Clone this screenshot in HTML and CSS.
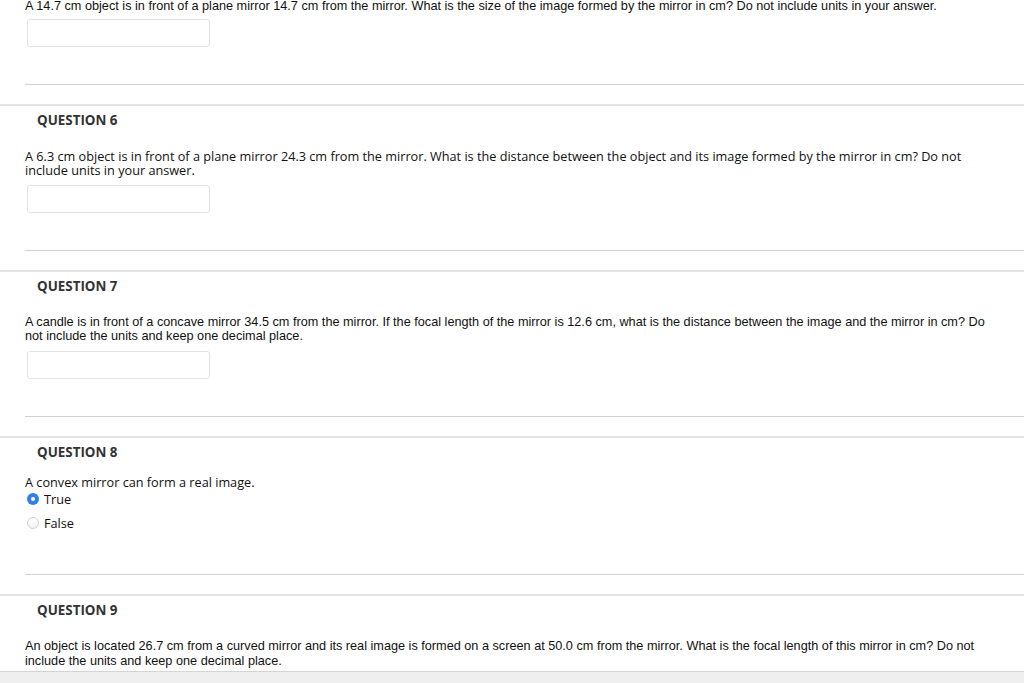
FILE: index.html
```html
<!DOCTYPE html>
<html lang="en">
<head>
<meta charset="utf-8">
<title>Quiz</title>
<link rel="stylesheet" href="styles.css">
</head>
<body>
<div class="page">
  <section class="question question-first">
    <div class="q-body">
      <p class="q-text arial">A 14.7 cm object is in front of a plane mirror 14.7 cm from the mirror. What is the size of the image formed by the mirror in cm? Do not include units in your answer.</p>
      <div class="answer-box"></div>
      <div class="separator"></div>
    </div>
  </section>

  <section class="question">
    <div class="divider"></div>
    <h2 class="q-title">QUESTION 6</h2>
    <div class="q-body">
      <p class="q-text sans">A 6.3 cm object is in front of a plane mirror 24.3 cm from the mirror. What is the distance between the object and its image formed by the mirror in cm? Do not<br>include units in your answer.</p>
      <div class="answer-box"></div>
      <div class="separator"></div>
    </div>
  </section>

  <section class="question">
    <div class="divider"></div>
    <h2 class="q-title">QUESTION 7</h2>
    <div class="q-body">
      <p class="q-text arial">A candle is in front of a concave mirror 34.5 cm from the mirror. If the focal length of the mirror is 12.6 cm, what is the distance between the image and the mirror in cm? Do<br>not include the units and keep one decimal place.</p>
      <div class="answer-box"></div>
      <div class="separator"></div>
    </div>
  </section>

  <section class="question">
    <div class="divider"></div>
    <h2 class="q-title">QUESTION 8</h2>
    <div class="q-body">
      <p class="q-text sans q-text-tight">A convex mirror can form a real image.</p>
      <div class="options">
        <label class="option"><span class="radio radio-on"></span><span class="option-label">True</span></label>
        <label class="option"><span class="radio"></span><span class="option-label">False</span></label>
      </div>
      <div class="separator separator-options"></div>
    </div>
  </section>

  <section class="question">
    <div class="divider"></div>
    <h2 class="q-title">QUESTION 9</h2>
    <div class="q-body">
      <p class="q-text arial q-text-loose">An object is located 26.7 cm from a curved mirror and its real image is formed on a screen at 50.0 cm from the mirror. What is the focal length of this mirror in cm? Do not<br>include the units and keep one decimal place.</p>
    </div>
  </section>
</div>
<div class="footer-band"></div>
</body>
</html>
```

FILE: styles.css
```css
html, body {
  margin: 0;
  padding: 0;
  background: #ffffff;
  height: 683px;
  overflow: hidden;
}

body {
  font-family: "Open Sans", "Liberation Sans", Arial, sans-serif;
  color: #111111;
  display: flex;
  flex-direction: column;
}

.page {
  display: flex;
  flex-direction: column;
}

.question {
  display: flex;
  flex-direction: column;
}

.divider {
  height: 2px;
  background: #e4e4e4;
}

.q-title {
  margin: 5px 0 0 37px;
  font-family: "Open Sans", sans-serif;
  font-weight: 700;
  font-size: 13.4px;
  line-height: 18px;
  color: #333333;
  letter-spacing: 0;
}

.q-body {
  display: flex;
  flex-direction: column;
  padding-left: 25px;
}

.q-text {
  margin: 20px 0 0 0;
  font-size: 13px;
  line-height: 14px;
  color: #111111;
}

.question-first .q-text {
  margin-top: -1px;
}

.question-first .answer-box {
  margin-top: 6px;
}

.q-text-tight {
  margin-top: 14px;
}

.q-text-loose {
  line-height: 15px;
}

.arial {
  font-family: "Liberation Sans", Arial, sans-serif;
  font-size: 12.7px;
}

.sans {
  font-family: "Open Sans", sans-serif;
  font-size: 12.7px;
}

.answer-box {
  margin: 8px 0 0 2px;
  width: 183px;
  height: 28px;
  box-sizing: border-box;
  border: 1px solid #e2e2e2;
  border-radius: 3px;
  background: #ffffff;
}

.separator {
  margin-top: 37px;
  margin-bottom: 19px;
  height: 1px;
  background: #d0d0d0;
}

.separator-options {
  margin-top: 42px;
}

.options {
  display: flex;
  flex-direction: column;
  gap: 6px;
  margin-top: 1px;
}

.option {
  display: flex;
  align-items: center;
  height: 18px;
  font-family: "Open Sans", sans-serif;
  font-size: 12.7px;
  color: #111111;
}

.radio {
  position: relative;
  width: 12px;
  height: 12px;
  box-sizing: border-box;
  margin-left: 2px;
  border-radius: 50%;
  border: 1px solid #d2d2d2;
  background: linear-gradient(#ffffff, #f3f3f3);
}

.radio-on {
  border: none;
  background: #2f7fef;
}

.radio-on::after {
  content: "";
  position: absolute;
  left: 4px;
  top: 4px;
  width: 4px;
  height: 4px;
  border-radius: 50%;
  background: #ffffff;
}

.option-label {
  margin-left: 5px;
}

.footer-band {
  margin-top: 2px;
  flex: 1;
  background: #efefef;
  border-top: 1px solid #d4d4d4;
}
```
